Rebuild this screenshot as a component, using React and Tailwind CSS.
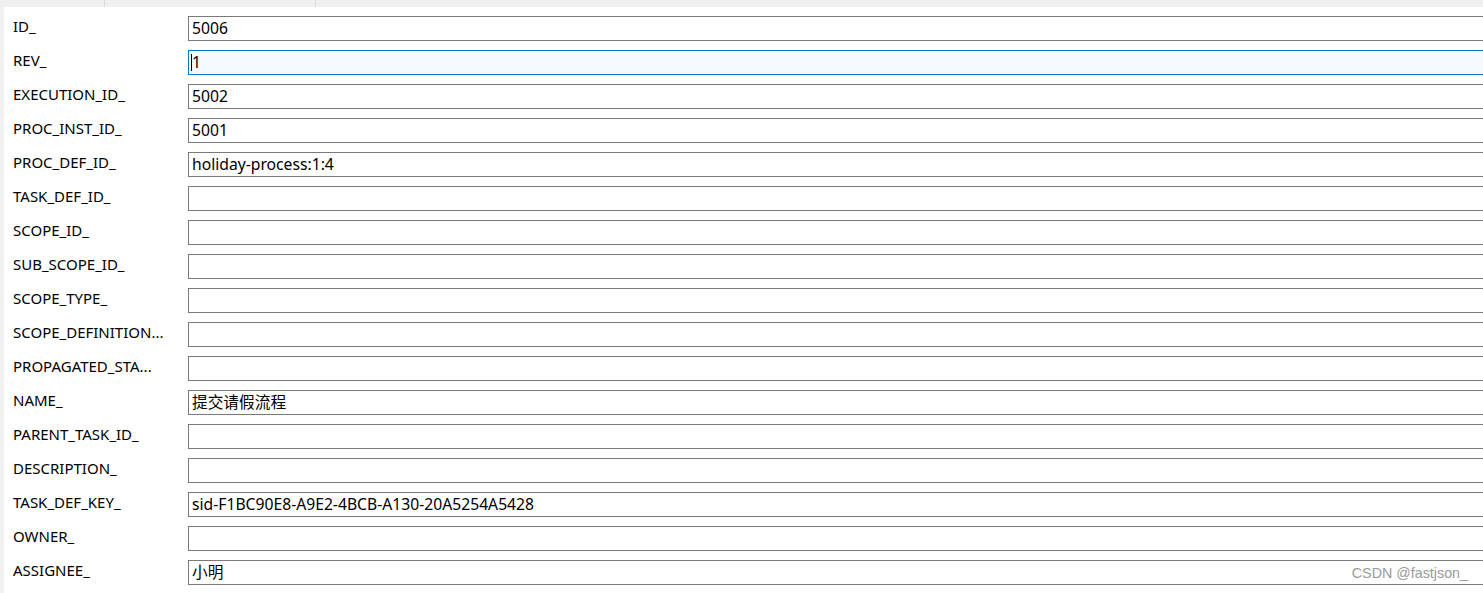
import React from "react";

const fields = [
  { name: "ID_", value: "5006" },
  { name: "REV_", value: "1", focused: true },
  { name: "EXECUTION_ID_", value: "5002" },
  { name: "PROC_INST_ID_", value: "5001" },
  { name: "PROC_DEF_ID_", value: "holiday-process:1:4" },
  { name: "TASK_DEF_ID_", value: "" },
  { name: "SCOPE_ID_", value: "" },
  { name: "SUB_SCOPE_ID_", value: "" },
  { name: "SCOPE_TYPE_", value: "" },
  { name: "SCOPE_DEFINITION...", value: "" },
  { name: "PROPAGATED_STA...", value: "" },
  { name: "NAME_", value: "提交请假流程" },
  { name: "PARENT_TASK_ID_", value: "" },
  { name: "DESCRIPTION_", value: "" },
  { name: "TASK_DEF_KEY_", value: "sid-F1BC90E8-A9E2-4BCB-A130-20A5254A5428" },
  { name: "OWNER_", value: "" },
  { name: "ASSIGNEE_", value: "小明" },
];

function FieldRow({ field }) {
  return (
    <div className="flex h-[25px] mb-[9px] items-start">
      <div className="w-[184px] shrink-0 pl-[9px] leading-[21px] text-[15px] text-black whitespace-nowrap">
        {field.name}
      </div>
      <div
        className={`flex-1 -mr-[20px] h-[25px] border flex items-center pl-[2px] text-[15.7px] text-black ${
          field.focused
            ? "border-[#0078d7] bg-[#f5faff]"
            : "border-[#7a7a7a] bg-white"
        }`}
      >
        {field.focused && <span className="w-px h-[17px] bg-black -mr-px"></span>}
        <span className="leading-[23px] pl-px">{field.value}</span>
      </div>
    </div>
  );
}

export default function App() {
  return (
    <div
      className="relative h-screen w-full flex flex-col bg-[#f0f0f0] overflow-hidden"
      style={{ fontFamily: '"Noto Sans", "Noto Sans CJK SC", sans-serif' }}
    >
      {/* tab strip */}
      <div className="h-[7px] shrink-0 flex">
        <div className="w-[105px] border-r border-[#d9d9d9]"></div>
        <div className="w-[211px] border-r border-[#d9d9d9]"></div>
      </div>
      <div className="flex-1 ml-[4px] bg-white pt-[9px] overflow-hidden">
        {fields.map((f) => (
          <FieldRow key={f.name} field={f} />
        ))}
      </div>
      <div
        className="absolute right-[15px] bottom-[9px] text-[14.3px] text-[#9a9a9a]"
        style={{ fontFamily: '"Liberation Sans", Arial, sans-serif' }}
      >
        CSDN @fastjson_
      </div>
    </div>
  );
}
